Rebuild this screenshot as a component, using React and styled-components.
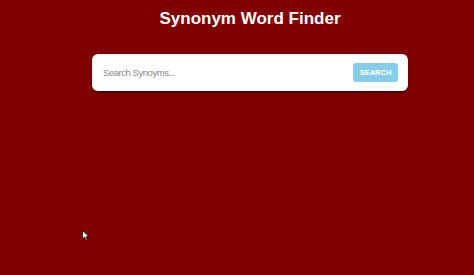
import React from "react";
import styled, { createGlobalStyle } from "styled-components";

const Global = createGlobalStyle`
  html, body { margin: 0; padding: 0; }
  body { background: #800000; font-family: "Liberation Sans", Arial, sans-serif; }
`;

const Page = styled.div`
  position: relative;
  width: 474px;
  height: 275px;
  box-sizing: border-box;
  padding-left: 26px;
  background: #800000;
  display: flex;
  flex-direction: column;
  align-items: center;
  overflow: hidden;
`;

const Title = styled.h1`
  margin: 8px 0 0;
  font-size: 17px;
  font-weight: 700;
  color: #fff;
  line-height: 22px;
`;

const Card = styled.form`
  margin: 24px 0 0;
  width: 316px;
  height: 37px;
  box-sizing: border-box;
  background: #fff;
  border-radius: 6px;
  box-shadow: 0 2px 3px rgba(0, 0, 0, 0.45);
  display: flex;
  align-items: center;
  padding: 0 10px 0 11px;
`;

const Input = styled.input`
  flex: 1;
  border: none;
  outline: none;
  background: transparent;
  font-family: "Liberation Sans", Arial, sans-serif;
  font-size: 9.5px;
  letter-spacing: -0.45px;
  color: #333;
  padding: 0;
  &::placeholder { color: #8a8a8a; }
`;

const Button = styled.button`
  width: 45px;
  height: 19px;
  border: none;
  border-radius: 3px;
  background: #87cde9;
  color: #fff;
  font-family: "Liberation Sans", Arial, sans-serif;
  font-weight: 700;
  font-size: 7.5px;
  padding: 0;
`;

const Cursor = styled.svg`
  position: absolute;
  left: 82px;
  top: 230px;
`;

export default function App() {
  return (
    <>
      <Global />
      <Page>
        <Title>Synonym Word Finder</Title>
        <Card onSubmit={(e) => e.preventDefault()}>
          <Input placeholder="Search Synoyms..." />
          <Button type="submit">SEARCH</Button>
        </Card>
        <Cursor width="8" height="11" viewBox="0 0 8 11">
          <path d="M0.5 0.5 L0.5 9 L2.6 7 L4 10.3 L5.3 9.7 L4 6.6 L7 6.6 Z" fill="#fff" stroke="#000" strokeWidth="0.7" />
        </Cursor>
      </Page>
    </>
  );
}
